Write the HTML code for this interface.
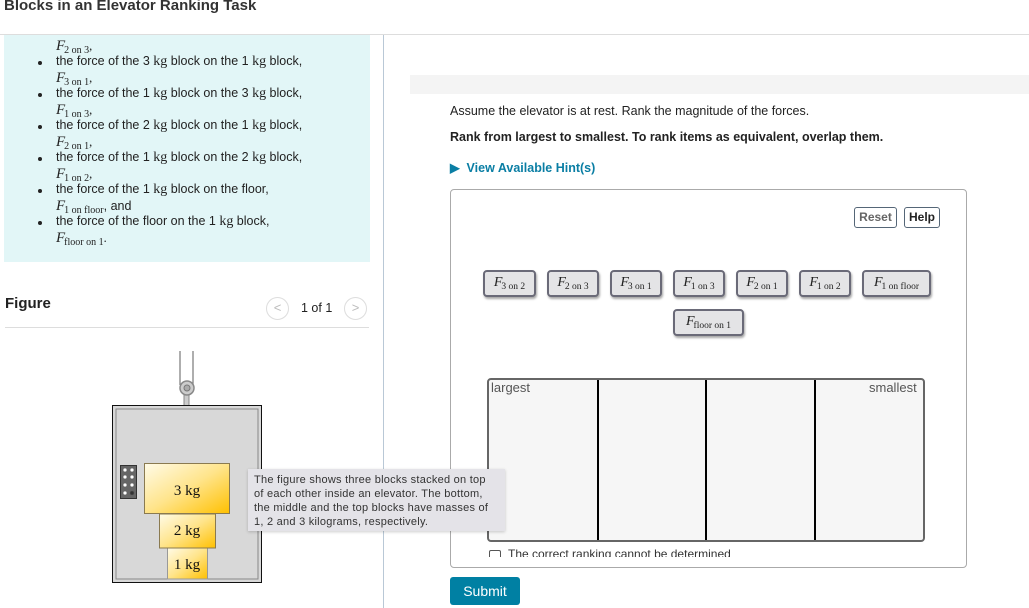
<!DOCTYPE html>
<html><head><meta charset="utf-8"><style>
*{margin:0;padding:0;box-sizing:border-box}
body{width:1029px;height:608px;overflow:hidden;background:#fff;font-family:"Liberation Sans",sans-serif;color:#222;position:relative}
.a{position:absolute}
.m{font-family:"Liberation Serif",serif}
.m i{font-size:15px}
.sub{font-size:10px;position:relative;top:3px;margin-left:-1px}
.li{position:absolute;left:56px;font-size:12.5px;white-space:nowrap}
.dot{position:absolute;left:38px;width:4px;height:4px;border-radius:2px;background:#222}
.chip{position:absolute;height:27px;background:#e4e4e6;border:2px solid #6a6a78;border-radius:4px;box-shadow:1px 2px 2px rgba(0,0,0,.35);font-family:"Liberation Serif",serif;font-size:14px;text-align:center;line-height:21px;white-space:nowrap}
.chip span{font-size:9.5px;position:relative;top:3px;margin-left:-1px}
</style></head><body>
<div class="a" style="left:4px;top:-3px;font-size:15px;font-weight:bold;color:#333">Blocks in an Elevator Ranking Task</div>
<div class="a" style="left:0;top:34px;width:1029px;height:1px;background:#ddd"></div>
<div class="a" style="left:4px;top:35px;width:366px;height:227px;background:#e2f6f7"></div>
<div class="a" style="left:383px;top:35px;width:1px;height:573px;background:#b9c8d6"></div>

<div class="li m" style="top:38px"><i>F</i><span class="sub">2 on 3</span>,</div>
<div class="dot" style="top:61px"></div><div class="li" style="top:54px">the force of the 3 <span class="m" style="font-size:14px">kg</span> block on the 1 <span class="m" style="font-size:14px">kg</span> block,</div>
<div class="li m" style="top:70px"><i>F</i><span class="sub">3 on 1</span>,</div>
<div class="dot" style="top:93px"></div><div class="li" style="top:86px">the force of the 1 <span class="m" style="font-size:14px">kg</span> block on the 3 <span class="m" style="font-size:14px">kg</span> block,</div>
<div class="li m" style="top:102px"><i>F</i><span class="sub">1 on 3</span>,</div>
<div class="dot" style="top:125px"></div><div class="li" style="top:118px">the force of the 2 <span class="m" style="font-size:14px">kg</span> block on the 1 <span class="m" style="font-size:14px">kg</span> block,</div>
<div class="li m" style="top:134px"><i>F</i><span class="sub">2 on 1</span>,</div>
<div class="dot" style="top:157px"></div><div class="li" style="top:150px">the force of the 1 <span class="m" style="font-size:14px">kg</span> block on the 2 <span class="m" style="font-size:14px">kg</span> block,</div>
<div class="li m" style="top:166px"><i>F</i><span class="sub">1 on 2</span>,</div>
<div class="dot" style="top:189px"></div><div class="li" style="top:182px">the force of the 1 <span class="m" style="font-size:14px">kg</span> block on the floor,</div>
<div class="li" style="top:198px"><span class="m"><i>F</i><span class="sub">1 on floor</span></span>, and</div>
<div class="dot" style="top:221px"></div><div class="li" style="top:214px">the force of the floor on the 1 <span class="m" style="font-size:14px">kg</span> block,</div>
<div class="li m" style="top:230px"><i>F</i><span class="sub">floor on 1</span>.</div>

<div class="a" style="left:5px;top:295px;font-size:15px;font-weight:bold">Figure</div>
<div class="a" style="left:266px;top:297px;width:23px;height:23px;border:1px solid #ddd;border-radius:50%;color:#bbb;font-size:13px;text-align:center;line-height:20px">&lt;</div>
<div class="a" style="left:301px;top:301px;font-size:12.5px">1 of 1</div>
<div class="a" style="left:344px;top:297px;width:23px;height:23px;border:1px solid #ddd;border-radius:50%;color:#bbb;font-size:13px;text-align:center;line-height:20px">&gt;</div>
<div class="a" style="left:5px;top:327px;width:364px;height:1px;background:#ddd"></div>

<svg class="a" style="left:100px;top:340px" width="180" height="250">
<line x1="80" y1="11" x2="80" y2="45" stroke="#777" stroke-width="1.2"/>
<line x1="93" y1="11" x2="93" y2="45" stroke="#777" stroke-width="1.2"/>
<rect x="84" y="48" width="5" height="18" fill="#ccc" stroke="#888"/>
<circle cx="87" cy="48" r="7" fill="#ccc" stroke="#888" stroke-width="1.5"/>
<circle cx="87" cy="48" r="3" fill="#aaa" stroke="#777"/>
<rect x="12.5" y="65.5" width="149" height="177" fill="#d8d8d8" stroke="#111"/>
<rect x="16" y="69" width="142" height="170" fill="none" stroke="#888" stroke-width="1"/>
<defs><linearGradient id="g" x1="0" y1="0" x2="1" y2="1"><stop offset="0" stop-color="#fffbe8"/><stop offset=".5" stop-color="#ffe48a"/><stop offset="1" stop-color="#ffc000"/></linearGradient></defs>
<rect x="20.5" y="125.5" width="16" height="33" fill="#666" stroke="#333"/>
<g fill="#fff" stroke="#555" stroke-width=".5"><circle cx="25" cy="130" r="2"/><circle cx="32" cy="130" r="2"/><circle cx="25" cy="137" r="2"/><circle cx="32" cy="137" r="2"/><circle cx="25" cy="145" r="2"/><circle cx="32" cy="145" r="2"/><circle cx="25" cy="153" r="2"/><circle cx="32" cy="153" r="2" fill="#333"/></g>
<rect x="67.5" y="208" width="40" height="31" fill="url(#g)" stroke="#999"/>
<rect x="59.5" y="174" width="56" height="34" fill="url(#g)" stroke="#8a7a50"/>
<rect x="44.5" y="123.5" width="85" height="50" fill="url(#g)" stroke="#8a7a50"/>
<g font-family="Liberation Serif,serif" font-size="15" text-anchor="middle" fill="#111"><text x="87" y="155">3 kg</text><text x="87" y="195">2 kg</text><text x="87" y="229">1 kg</text></g>
</svg>

<div class="a" style="left:410px;top:75px;width:619px;height:19px;background:#f4f4f4"></div>
<div class="a" style="left:450px;top:104px;font-size:12.5px">Assume the elevator is at rest. Rank the magnitude of the forces.</div>
<div class="a" style="left:450px;top:130px;font-size:12.5px;font-weight:bold">Rank from largest to smallest. To rank items as equivalent, overlap them.</div>
<div class="a" style="left:450px;top:160px;font-size:12.5px;font-weight:bold;color:#0a7ea4">&#9654;&nbsp; View Available Hint(s)</div>

<div class="a" style="left:450px;top:189px;width:517px;height:379px;border:1px solid #aaa;border-radius:4px;overflow:hidden">
<div class="a" style="left:403px;top:17px;width:43px;height:21px;border:1px solid #567;border-radius:3px;font-size:12px;font-weight:bold;color:#666;text-align:center;line-height:19px">Reset</div>
<div class="a" style="left:453px;top:17px;width:36px;height:21px;border:1px solid #567;border-radius:3px;font-size:12px;font-weight:bold;text-align:center;line-height:19px">Help</div>
<div class="a" style="left:36px;top:188px;width:438px;height:164px;border:2px solid #666;border-radius:4px;background:#f6f6f6"></div>
<div class="a" style="left:146px;top:190px;width:2px;height:160px;background:#000"></div>
<div class="a" style="left:254px;top:190px;width:2px;height:160px;background:#000"></div>
<div class="a" style="left:363px;top:190px;width:2px;height:160px;background:#000"></div>
<div class="a" style="left:40px;top:190px;font-size:13px;color:#555">largest</div>
<div class="a" style="left:418px;top:190px;font-size:13px;color:#555">smallest</div>
<div class="a" style="left:36px;top:358px;width:300px;height:9px;overflow:hidden">
<div class="a" style="left:2px;top:2px;width:12px;height:12px;border:1px solid #555;border-radius:2px"></div>
<div class="a" style="left:21px;top:-1px;font-size:12px;color:#333;white-space:nowrap">The correct ranking cannot be determined</div>
</div>
</div>
<div class="chip" style="left:483px;top:270px;width:53px"><i>F</i><span>3 on 2</span></div>
<div class="chip" style="left:547px;top:270px;width:52px"><i>F</i><span>2 on 3</span></div>
<div class="chip" style="left:610px;top:270px;width:52px"><i>F</i><span>3 on 1</span></div>
<div class="chip" style="left:673px;top:270px;width:52px"><i>F</i><span>1 on 3</span></div>
<div class="chip" style="left:736px;top:270px;width:52px"><i>F</i><span>2 on 1</span></div>
<div class="chip" style="left:799px;top:270px;width:52px"><i>F</i><span>1 on 2</span></div>
<div class="chip" style="left:862px;top:270px;width:69px"><i>F</i><span>1 on floor</span></div>
<div class="chip" style="left:673px;top:309px;width:71px"><i>F</i><span>floor on 1</span></div>

<div class="a" style="left:248px;top:469px;width:257px;height:62px;background:#e4e3e8;box-shadow:0 1px 3px rgba(0,0,0,.2);padding:4px 14px 4px 6px;font-size:11px;line-height:14px;color:#333;letter-spacing:0.25px;z-index:5">The figure shows three blocks stacked on top of each other inside an elevator. The bottom, the middle and the top blocks have masses of 1, 2 and 3 kilograms, respectively.</div>

<div class="a" style="left:450px;top:577px;width:70px;height:28px;background:#0080a3;border-radius:3px;color:#fff;font-size:14px;text-align:center;line-height:28px">Submit</div>
</body></html>
